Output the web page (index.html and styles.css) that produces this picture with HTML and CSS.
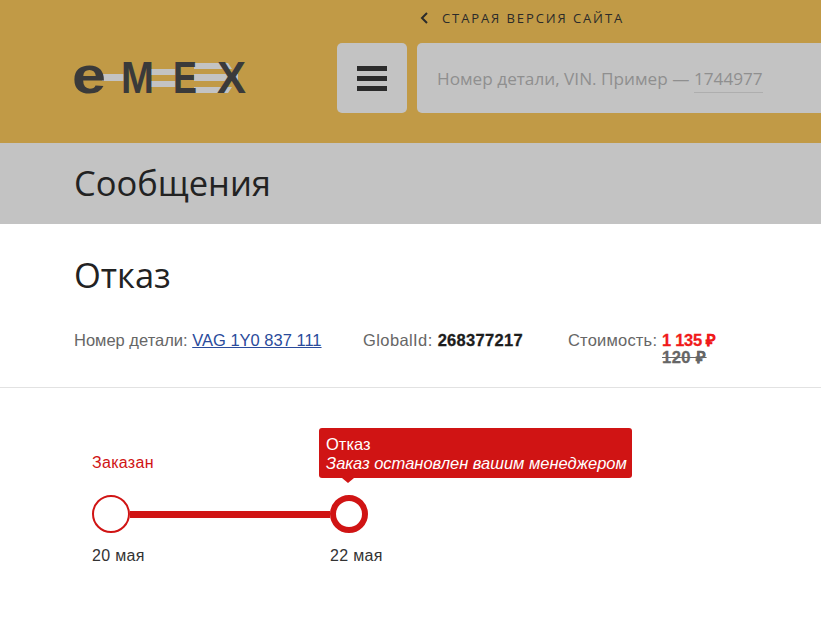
FILE: index.html
```html
<!DOCTYPE html>
<html lang="ru">
<head>
    <meta charset="UTF-8">
    <meta name="viewport" content="width=device-width, initial-scale=1.0">
    <title>Сообщения</title>
    <link rel="stylesheet" href="styles.css">
</head>
<body>
    <header class="header">
        <a class="logo" href="#">
            <svg width="184" height="80" viewBox="0 0 184 80">
                <g fill="#c3c3c3">
                    <rect x="32" y="31" width="24" height="7"/>
                    <rect x="80" y="26" width="26" height="6"/>
                    <rect x="80" y="38" width="26" height="6"/>
                    <path d="M124 20h34l4 6h-38z"/>
                    <path d="M124 31h44v7h-44z"/>
                    <path d="M124 44h38l-4 6h-34z"/>
                </g>
                <g fill="#3a3a3a" font-family="'Liberation Sans', sans-serif" font-weight="700">
                    <text x="2" y="50" font-size="52" textLength="34" lengthAdjust="spacingAndGlyphs">e</text>
                    <text x="51" y="50" font-size="43.5" textLength="33" lengthAdjust="spacingAndGlyphs">M</text>
                    <text x="103" y="50" font-size="43.5" textLength="24" lengthAdjust="spacingAndGlyphs">E</text>
                    <text x="147" y="50" font-size="43.5" textLength="29" lengthAdjust="spacingAndGlyphs">X</text>
                </g>
            </svg>
        </a>
        <div class="header-right">
            <a class="old-site" href="#">
                <svg width="9" height="12" viewBox="0 0 9 12"><path d="M7 1 2 6l5 5" fill="none" stroke="#2b2b2b" stroke-width="2"/></svg>
                СТАРАЯ ВЕРСИЯ САЙТА
            </a>
            <div class="search-row">
                <button class="menu-btn" type="button">
                    <span></span><span></span><span></span>
                </button>
                <div class="search">Номер детали, VIN. Пример — <span class="search-sample">1744977</span></div>
            </div>
        </div>
    </header>

    <div class="title-band">
        <h1>Сообщения</h1>
    </div>

    <div class="message">
        <h2>Отказ</h2>
        <div class="info">
            <div class="info-part">Номер детали: <a href="#">VAG 1Y0 837 111</a></div>
            <div class="info-id">GlobalId: <b>268377217</b></div>
            <div class="info-cost">
                <span class="cost-label">Стоимость:&nbsp;</span>
                <div class="prices">
                    <b class="price-new">1 135 ₽</b>
                    <b class="price-old">120 ₽</b>
                </div>
            </div>
        </div>
    </div>

    <div class="timeline">
        <div class="step">
            <div class="step-name">Заказан</div>
            <div class="step-track">
                <span class="dot"></span>
                <span class="line"></span>
            </div>
            <div class="step-date">20 мая</div>
        </div>
        <div class="step">
            <div class="tooltip">
                Отказ<br>
                <i>Заказ остановлен вашим менеджером</i>
            </div>
            <div class="step-name">&nbsp;</div>
            <div class="step-track">
                <span class="dot dot-current"></span>
            </div>
            <div class="step-date">22 мая</div>
        </div>
    </div>
</body>
</html>
```

FILE: styles.css
```css
html, body {
    overflow: hidden;
}
body {
    margin: 0;
    background: #fff;
    color: #222;
    font-family: 'Liberation Sans', Arial, sans-serif;
}
.header {
    display: flex;
    height: 143px;
    background-color: #c19a46;
    box-sizing: border-box;
    padding-left: 70px;
}
.logo {
    display: block;
    width: 267px;
    padding-top: 43px;
}
.header-right {
    flex: 1;
    min-width: 0;
}
.old-site {
    display: flex;
    align-items: center;
    gap: 13px;
    height: 43px;
    padding: 0 0 7px 83px;
    box-sizing: border-box;
    color: #2b2b2b;
    font-family: 'Open Sans', sans-serif;
    font-size: 13px;
    letter-spacing: 1.9px;
    text-decoration: none;
}
.search-row {
    display: flex;
    gap: 10px;
    margin-right: -20px;
}
.menu-btn {
    display: flex;
    flex-direction: column;
    justify-content: center;
    align-items: center;
    gap: 5px;
    width: 70px;
    height: 70px;
    padding: 0;
    border: none;
    border-radius: 5px;
    background-color: #c3c3c3;
}
.menu-btn span {
    width: 30px;
    height: 5px;
    background-color: #2b2b2b;
}
.search {
    flex: 1;
    height: 70px;
    padding: 24px 0 0 20px;
    box-sizing: border-box;
    border-radius: 5px;
    background-color: #c3c3c3;
    color: #8f8f8f;
    font-family: 'Open Sans', sans-serif;
    font-size: 17.2px;
}
.search-sample {
    display: inline-block;
    height: 25px;
    border-bottom: 1px solid #aeaeae;
}
.title-band {
    height: 81px;
    padding-left: 74px;
    background-color: #c3c3c3;
}
h1 {
    margin: 0;
    padding-top: 17px;
    font-family: 'Open Sans', sans-serif;
    font-size: 34.5px;
    font-weight: 400;
    line-height: 46px;
    color: #222;
}
.message {
    height: 164px;
    padding: 0 0 0 74px;
    box-sizing: border-box;
    border-bottom: 1px solid #e2e2e2;
}
h2 {
    margin: 0;
    padding-top: 28px;
    font-family: 'Open Sans', sans-serif;
    font-size: 34.5px;
    font-weight: 400;
    line-height: 46px;
    color: #222;
}
.info {
    display: flex;
    margin-top: 33px;
    color: #666;
    font-size: 16.5px;
    line-height: 18px;
}
.info-part {
    width: 289px;
}
.info-part a {
    color: #2a4b9b;
}
.info-id {
    width: 205px;
    letter-spacing: 0.4px;
}
.info-id b {
    color: #1c1c1c;
    letter-spacing: 0.3px;
    -webkit-text-stroke: 0.3px #1c1c1c;
}
.info-cost {
    display: flex;
}
.cost-label {
    letter-spacing: 0.2px;
}
.price-new {
    display: block;
    color: #f01a1a;
    letter-spacing: -0.3px;
    -webkit-text-stroke: 0.3px #f01a1a;
}
.price-old {
    display: block;
    margin-top: -1px;
    color: #666;
    letter-spacing: 0.5px;
    text-decoration: line-through;
    -webkit-text-stroke: 0.3px #666;
}
.timeline {
    display: flex;
    padding: 64px 0 0 92px;
}
.step {
    position: relative;
    width: 238px;
    font-size: 16px;
    letter-spacing: 0.3px;
}
.step-name {
    height: 22px;
    line-height: 22px;
    color: #d01414;
    margin-bottom: 21px;
}
.step-track {
    display: flex;
    align-items: center;
    height: 38px;
}
.dot {
    flex: none;
    width: 38px;
    height: 38px;
    box-sizing: border-box;
    border: 2px solid #d01414;
    border-radius: 50%;
    background: #fff;
}
.dot-current {
    border-width: 6px;
}
.line {
    flex: 1;
    height: 7px;
    background-color: #d01414;
}
.step-date {
    margin-top: 13px;
    line-height: 20px;
    color: #333;
}
.tooltip {
    position: absolute;
    left: -11px;
    top: -24px;
    width: 313px;
    height: 50px;
    padding: 7px 0 0 7px;
    box-sizing: border-box;
    border-radius: 3px;
    background-color: #d01414;
    color: #fff;
    font-size: 16.5px;
    line-height: 19px;
    letter-spacing: 0;
    white-space: nowrap;
}
.tooltip::after {
    content: "";
    position: absolute;
    left: 23px;
    bottom: -5px;
    border-left: 6px solid transparent;
    border-right: 6px solid transparent;
    border-top: 5px solid #d01414;
}
```
